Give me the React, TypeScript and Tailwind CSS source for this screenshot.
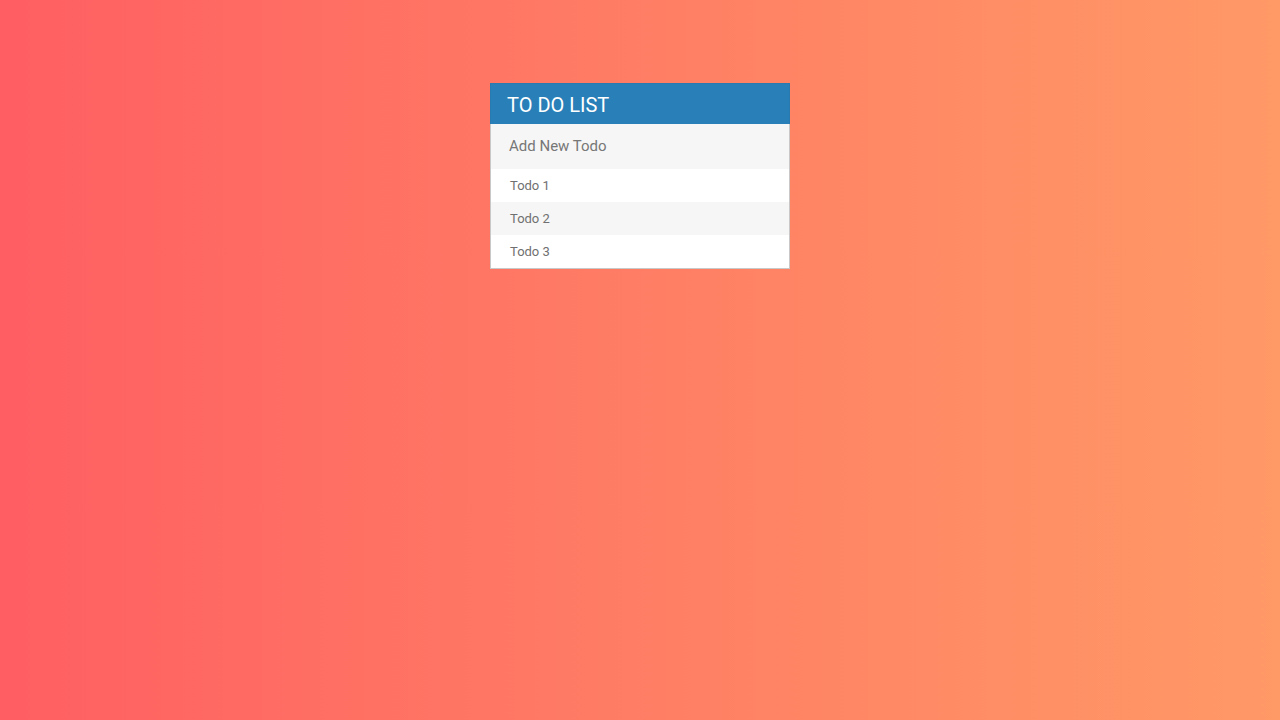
import React from "react";

export default function App() {
  const todos = ["Todo 1", "Todo 2", "Todo 3"];
  return (
    <div
      className="w-[1280px] h-[720px] bg-gradient-to-r from-[#ff5e62] to-[#ff9966] flex justify-center pt-[83px]"
      style={{ fontFamily: "Roboto, 'Liberation Sans', sans-serif" }}
    >
      <div className="w-[300px] h-fit border border-[#c8c8c8] bg-white">
        <div className="h-[41px] bg-[#2980b9] flex items-center px-[16px] pt-[2px] text-white text-[20px] -mx-px -mt-px border-t border-x border-[#2a7ab0]">
          TO DO LIST
        </div>
        <div className="h-[45px] bg-[#f6f6f6] flex items-center px-[18px] text-[15px] text-[#777]">
          Add New Todo
        </div>
        {todos.map((t, i) => (
          <div
            key={t}
            className={`h-[33px] flex items-center px-[19px] text-[13px] text-[#707070] ${
              i === 1 ? "bg-[#f6f6f6]" : "bg-white"
            }`}
          >
            {t}
          </div>
        ))}
      </div>
    </div>
  );
}
